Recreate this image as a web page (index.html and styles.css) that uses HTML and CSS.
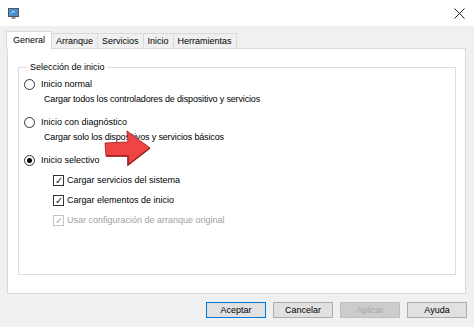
FILE: index.html
```html
<!DOCTYPE html>
<html lang="es">
<head>
    <meta charset="UTF-8">
    <meta name="viewport" content="width=device-width, initial-scale=1.0">
    <title>Configuración del sistema</title>
    <link rel="stylesheet" href="styles.css">
</head>
<body>
    <div class="window">
        <div class="titlebar">
            <svg class="app-icon" width="11" height="11" viewBox="0 0 11 11">
                <rect x="0.5" y="0.5" width="10" height="8" fill="#7d8a99" stroke="#4a5663"/>
                <rect x="1.5" y="1.5" width="8" height="6" fill="#3d8fd6"/>
                <path d="M3 5.5 L5 3 L7 4.5" stroke="#cfe6fa" fill="none"/>
                <rect x="3.5" y="9" width="4" height="2" fill="#8d97a3"/>
            </svg>
            <svg class="close" width="11" height="11" viewBox="0 0 11 11">
                <path d="M0.5 0.5 L10.5 10.5 M10.5 0.5 L0.5 10.5" stroke="#222" stroke-width="1"/>
            </svg>
        </div>

        <div class="content">
            <div class="tabs">
                <div class="tab active">General</div>
                <div class="tab">Arranque</div>
                <div class="tab">Servicios</div>
                <div class="tab">Inicio</div>
                <div class="tab">Herramientas</div>
            </div>

            <div class="panel">
                <fieldset class="group">
                    <legend>Selección de inicio</legend>

                    <div class="option first"><span class="radio"></span>Inicio normal</div>
                    <div class="desc">Cargar todos los controladores de dispositivo y servicios</div>

                    <div class="option"><span class="radio"></span>Inicio con diagnóstico</div>
                    <div class="desc">Cargar solo los dispositivos y servicios básicos</div>

                    <div class="option"><span class="radio checked"></span>Inicio selectivo</div>

                    <div class="check-row"><span class="checkbox">&#10003;</span>Cargar servicios del sistema</div>
                    <div class="check-row"><span class="checkbox">&#10003;</span>Cargar elementos de inicio</div>
                    <div class="check-row disabled"><span class="checkbox">&#10003;</span>Usar configuración de arranque original</div>
                </fieldset>
            </div>

            <div class="buttons">
                <button class="default">Aceptar</button>
                <button>Cancelar</button>
                <button disabled>Aplicar</button>
                <button>Ayuda</button>
            </div>
        </div>

        <!-- flecha roja superpuesta -->
        <svg class="arrow" width="50" height="40" viewBox="0 0 50 40">
            <path d="M1 13 L24 12 L23 1 L46 18 L24 35 L24 26 L2 26 Z" fill="#ef4444" stroke="#b52a2a" stroke-width="1" stroke-linejoin="round"/>
            <path d="M2 26 L24 26 L24 35 L46 18" fill="none" stroke="#9c2020" stroke-width="1.5"/>
        </svg>
    </div>
</body>
</html>
```

FILE: styles.css
```css
body {
    margin: 0;
    font-family: "Liberation Sans", Arial, sans-serif;
    font-size: 9px;
    color: #000;
    background-color: #f0f0f0;
}
.window {
    position: relative;
    width: 474px;
    height: 327px;
    overflow: hidden;
    background-color: #f0f0f0;
}
.titlebar {
    height: 26px;
    background-color: #fff;
    display: flex;
    align-items: center;
    justify-content: space-between;
    padding: 0 9px 0 8px;
    box-sizing: border-box;
}
.app-icon {
    margin-top: 0;
}
.close {
    margin-top: 1px;
}
.content {
    padding: 5px 0 0 6px;
}
.tabs {
    display: flex;
    align-items: flex-end;
    height: 17px;
    position: relative;
    z-index: 1;
}
.tab {
    height: 15px;
    line-height: 14px;
    padding: 0 4px;
    border: 1px solid #d9d9d9;
    border-bottom: none;
    border-left: none;
    background-color: #f0f0f0;
    box-sizing: border-box;
}
.tab.active {
    height: 18px;
    line-height: 16px;
    padding: 0 6px 0 6px;
    background-color: #fff;
    border-left: 1px solid #d9d9d9;
    margin-bottom: -1px;
}
.panel {
    margin-left: 1px;
    width: 459px;
    height: 246px;
    box-sizing: border-box;
    background-color: #fff;
    border: 1px solid #d9d9d9;
    padding: 11px 0 0 10px;
}
.group {
    margin: 0;
    width: 438px;
    height: 215px;
    box-sizing: border-box;
    border: 1px solid #dcdcdc;
    padding: 2px 0 0 5px;
}
.group legend {
    margin-left: 3px;
    padding: 0 3px;
    line-height: 14px;
}
.option {
    display: flex;
    align-items: center;
    height: 16px;
    margin-top: 7px;
}
.option.first {
    margin-top: 0;
}
.radio {
    width: 11px;
    height: 11px;
    box-sizing: border-box;
    border: 1px solid #333;
    border-radius: 50%;
    margin-right: 6px;
    display: flex;
    align-items: center;
    justify-content: center;
}
.radio.checked::after {
    content: "";
    width: 5px;
    height: 5px;
    border-radius: 50%;
    background-color: #000;
}
.desc {
    line-height: 15px;
    padding-left: 20px;
    letter-spacing: -0.15px;
}
.check-row {
    display: flex;
    align-items: center;
    height: 16px;
    margin-top: 4px;
    padding-left: 29px;
}
.option + .check-row {
    margin-top: 4px;
}
.checkbox {
    width: 11px;
    height: 11px;
    box-sizing: border-box;
    border: 1px solid #333;
    margin-right: 3px;
    font-size: 10px;
    line-height: 9px;
    text-align: center;
    color: #222;
}
.check-row.disabled {
    color: #a0a0a0;
}
.check-row.disabled .checkbox {
    border-color: #c4c4c4;
    color: #b0b0b0;
}
.buttons {
    display: flex;
    justify-content: flex-end;
    gap: 7px;
    width: 461px;
    margin-top: 8px;
}
button {
    width: 60px;
    height: 16px;
    padding: 0;
    font-family: inherit;
    font-size: 9px;
    line-height: 14px;
    color: #000;
    background-color: #e1e1e1;
    border: 1px solid #adadad;
}
button.default {
    border: 1px solid #0078d7;
}
button:disabled {
    color: #a8a8a8;
    background-color: #cccccc;
    border-color: #bfbfbf;
}
.arrow {
    position: absolute;
    left: 104px;
    top: 130px;
}
```
